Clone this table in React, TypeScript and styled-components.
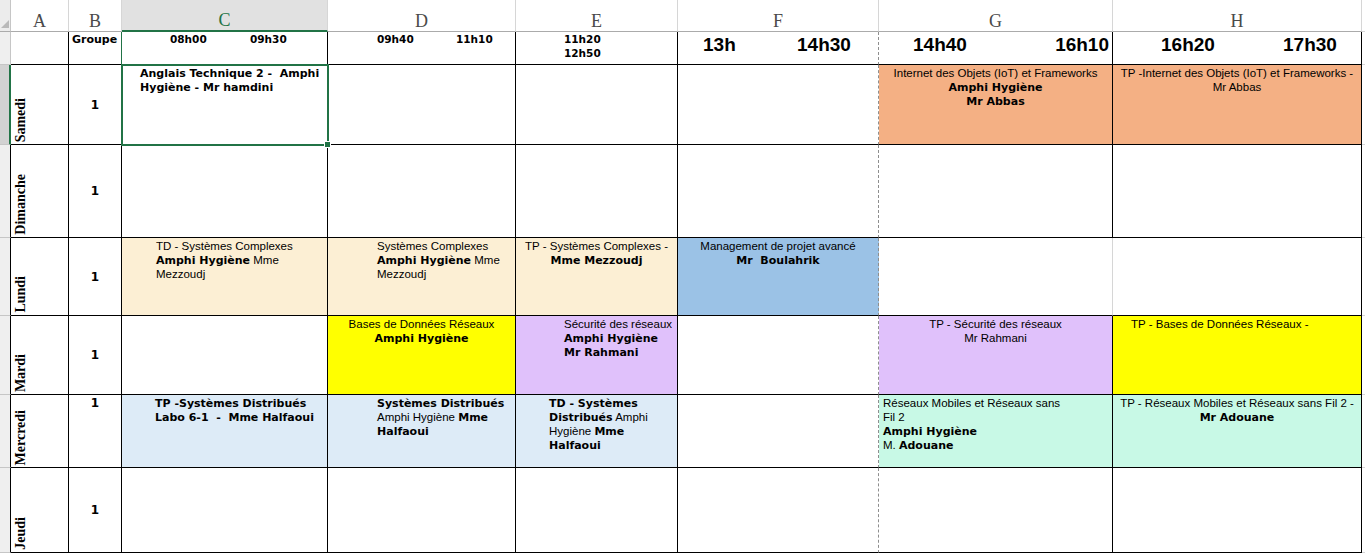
import React from 'react';
import styled, { createGlobalStyle, css } from 'styled-components';

const GlobalStyle = createGlobalStyle`
  html, body { margin: 0; padding: 0; background: #fff; overflow: hidden; }
  #root { width: 1365px; height: 555px; }
`;

const GREEN = '#217346';

const Sheet = styled.div`
  display: grid;
  grid-template-columns: 11px 58px 53px 206px 188px 162px 201px 234px 249px 1fr;
  grid-template-rows: 32px 33px 80px 93px 78px 79px 73px 85px 1fr;
  width: 1365px;
  height: 555px;
  overflow: hidden;
  background: #fff;
`;

const Base = styled.div`
  box-sizing: border-box;
  min-width: 0;
  overflow: hidden;
  white-space: pre;
  color: #000;
`;

const Corner = styled(Base)`
  position: relative;
  background: #ececec;
  border-right: 1px solid #c6c6c6;
  border-bottom: 1px solid #ababab;
  &::after {
    content: '';
    position: absolute;
    right: 1px;
    bottom: 3px;
    width: 0;
    height: 0;
    border-left: 8px solid transparent;
    border-bottom: 8px solid #b9b9b9;
  }
`;

const ColHeader = styled(Base)<{ $active?: boolean }>`
  display: flex;
  align-items: flex-end;
  justify-content: center;
  font-family: 'Liberation Serif', 'Times New Roman', serif;
  font-size: 18px;
  line-height: 20px;
  color: ${(p) => (p.$active ? GREEN : '#4a4a4a')};
  background: ${(p) => (p.$active ? '#e1e1e1' : '#fff')};
  border-right: 1px solid #d6d6d6;
  border-bottom: ${(p) => (p.$active ? `2px solid ${GREEN}` : '1px solid #ababab')};
`;

const RowHead = styled(Base)<{ $active?: boolean; $table?: boolean }>`
  background: ${(p) => (p.$active ? '#d2d2d2' : '#efefef')};
  border-bottom: 1px solid #c6c6c6;
  border-right: ${(p) =>
    p.$active ? `2px solid ${GREEN}` : p.$table ? '1px solid #000' : '1px solid #c6c6c6'};
`;

const Filler = styled(Base)`
  border-bottom: 1px solid #d6d6d6;
`;

const DayCell = styled(Base)`
  display: flex;
  align-items: flex-end;
  padding: 0 0 2px 2px;
  border-right: 1px solid #000;
  border-bottom: 1px solid #000;
`;

const DayLabel = styled.span`
  writing-mode: vertical-rl;
  transform: rotate(180deg);
  font-family: 'Liberation Serif', 'Times New Roman', serif;
  font-weight: bold;
  font-size: 14px;
  line-height: 16px;
`;

const GroupCell = styled(Base)<{ $top?: boolean }>`
  display: flex;
  justify-content: center;
  align-items: ${(p) => (p.$top ? 'flex-start' : 'center')};
  padding-top: ${(p) => (p.$top ? '1px' : '0')};
  font-family: 'DejaVu Sans', sans-serif;
  font-weight: bold;
  font-size: 12px;
  line-height: 14px;
  border-right: 1px solid #000;
  border-bottom: 1px solid #000;
`;

const TimeCell = styled(Base)<{ $indent?: number; $spread?: boolean; $dashed?: boolean; $edgeColor?: string }>`
  display: flex;
  align-items: flex-start;
  justify-content: ${(p) => (p.$spread ? 'space-between' : 'flex-start')};
  padding: 0 3px 0 ${(p) => p.$indent ?? 0}px;
  border-bottom: 1px solid #000;
  border-right: ${(p) => (p.$dashed ? '1px dashed #8e8e8e' : `1px solid ${p.$edgeColor ?? '#000'}`)};
`;

const Label = styled.span`
  font-family: 'DejaVu Sans', sans-serif;
  font-weight: bold;
  font-size: 11px;
  line-height: 13px;
  padding-top: 1px;
`;

const SmallTime = styled.span<{ $w?: number }>`
  font-family: 'DejaVu Sans', sans-serif;
  font-weight: bold;
  font-size: 10.5px;
  line-height: 13px;
  padding-top: 1px;
  ${(p) => p.$w && css`width: ${p.$w}px; flex: none;`}
`;

const TimeStack = styled.div`
  display: flex;
  flex-direction: column;
`;

const BigTime = styled.span<{ $w?: number }>`
  font-family: 'Liberation Sans', Arial, sans-serif;
  font-weight: bold;
  font-size: 19px;
  line-height: 22px;
  padding-top: 2px;
  ${(p) => p.$w && css`width: ${p.$w}px; flex: none;`}
`;

const SlotCell = styled(Base)<{
  $bg?: string;
  $indent?: number;
  $center?: boolean;
  $edge?: 'solid' | 'dashed' | 'grid';
  $selected?: boolean;
}>`
  background: ${(p) => p.$bg ?? '#fff'};
  padding: 1px 2px 0 ${(p) => p.$indent ?? 2}px;
  text-align: ${(p) => (p.$center ? 'center' : 'left')};
  font-family: 'Liberation Sans', Arial, sans-serif;
  font-size: 11.5px;
  line-height: 14px;
  border-bottom: 1px solid #000;
  border-right: ${(p) =>
    p.$edge === 'dashed'
      ? '1px dashed #8e8e8e'
      : p.$edge === 'grid'
      ? '1px solid #d6d6d6'
      : '1px solid #000'};
  ${(p) =>
    p.$selected &&
    css`
      position: relative;
      overflow: visible;
      outline: 2px solid ${GREEN};
      outline-offset: -1px;
      z-index: 1;
      &::after {
        content: '';
        position: absolute;
        right: -4px;
        bottom: -4px;
        width: 5px;
        height: 5px;
        background: ${GREEN};
        border: 1px solid #fff;
      }
    `}
`;

const Line = styled.div`
  height: 14px;
`;

const Strong = styled.b`
  font-family: 'DejaVu Sans', sans-serif;
  font-size: 11px;
  font-weight: bold;
`;

type Seg = string | { b: string };
type Slot = {
  bg?: string;
  indent?: number;
  center?: boolean;
  edge?: 'grid';
  selected?: boolean;
  lines?: Seg[][];
};
type Day = { name: string; topGroup?: boolean; active?: boolean; slots: Slot[] };

const ORANGE = '#f4b084';
const PEACH = '#fcefd4';
const BLUE = '#9bc2e6';
const YELLOW = '#ffff00';
const PURPLE = '#e0c1fb';
const LIGHTBLUE = '#ddebf7';
const MINT = '#c8f9e6';

const days: Day[] = [
  {
    name: 'Samedi',
    active: true,
    slots: [
      {
        indent: 18,
        selected: true,
        lines: [[{ b: 'Anglais Technique 2 -  Amphi' }], [{ b: 'Hygiène - Mr hamdini' }]],
      },
      {},
      {},
      {},
      {
        bg: ORANGE,
        center: true,
        lines: [['Internet des Objets (IoT) et Frameworks'], [{ b: 'Amphi Hygiène' }], [{ b: 'Mr Abbas' }]],
      },
      {
        bg: ORANGE,
        center: true,
        lines: [['TP -Internet des Objets (IoT) et Frameworks -'], ['Mr Abbas']],
      },
    ],
  },
  { name: 'Dimanche', slots: [{}, {}, {}, {}, {}, {}] },
  {
    name: 'Lundi',
    slots: [
      {
        bg: PEACH,
        indent: 34,
        lines: [['TD - Systèmes Complexes'], [{ b: 'Amphi Hygiène' }, ' Mme'], ['Mezzoudj']],
      },
      {
        bg: PEACH,
        indent: 49,
        lines: [['Systèmes Complexes'], [{ b: 'Amphi Hygiène' }, ' Mme'], ['Mezzoudj']],
      },
      {
        bg: PEACH,
        center: true,
        lines: [['TP - Systèmes Complexes -'], [{ b: 'Mme Mezzoudj' }]],
      },
      {
        bg: BLUE,
        center: true,
        lines: [['Management de projet avancé'], [{ b: 'Mr  Boulahrik' }]],
      },
      { edge: 'grid' },
      {},
    ],
  },
  {
    name: 'Mardi',
    slots: [
      {},
      {
        bg: YELLOW,
        center: true,
        lines: [['Bases de Données Réseaux'], [{ b: 'Amphi Hygiène' }]],
      },
      {
        bg: PURPLE,
        indent: 48,
        lines: [['Sécurité des réseaux'], [{ b: 'Amphi Hygiène' }], [{ b: 'Mr Rahmani' }]],
      },
      {},
      {
        bg: PURPLE,
        center: true,
        lines: [['TP - Sécurité des réseaux'], ['Mr Rahmani']],
      },
      {
        bg: YELLOW,
        indent: 18,
        lines: [['TP - Bases de Données Réseaux -']],
      },
    ],
  },
  {
    name: 'Mercredi',
    topGroup: true,
    slots: [
      {
        bg: LIGHTBLUE,
        indent: 33,
        lines: [[{ b: 'TP -Systèmes Distribués' }], [{ b: 'Labo 6-1  -  Mme Halfaoui' }]],
      },
      {
        bg: LIGHTBLUE,
        indent: 49,
        lines: [[{ b: 'Systèmes Distribués' }], ['Amphi Hygiène ', { b: 'Mme' }], [{ b: 'Halfaoui' }]],
      },
      {
        bg: LIGHTBLUE,
        indent: 33,
        lines: [
          [{ b: 'TD - Systèmes' }],
          [{ b: 'Distribués' }, ' Amphi'],
          ['Hygiène ', { b: 'Mme' }],
          [{ b: 'Halfaoui' }],
        ],
      },
      {},
      {
        bg: MINT,
        indent: 4,
        lines: [['Réseaux Mobiles et Réseaux sans'], ['Fil 2'], [{ b: 'Amphi Hygiène' }], ['M. ', { b: 'Adouane' }]],
      },
      {
        bg: MINT,
        center: true,
        lines: [['TP - Réseaux Mobiles et Réseaux sans Fil 2 -'], [{ b: 'Mr Adouane' }]],
      },
    ],
  },
  { name: 'Jeudi', slots: [{}, {}, {}, {}, {}, {}] },
];

const letters = ['A', 'B', 'C', 'D', 'E', 'F', 'G', 'H'];

function renderLine(segs: Seg[], key: number) {
  return (
    <Line key={key}>
      {segs.map((s, i) =>
        typeof s === 'string' ? <React.Fragment key={i}>{s}</React.Fragment> : <Strong key={i}>{s.b}</Strong>
      )}
    </Line>
  );
}

export default function App() {
  return (
    <>
      <GlobalStyle />
      <Sheet>
        <Corner />
        {letters.map((l) => (
          <ColHeader key={l} $active={l === 'C'}>
            {l}
          </ColHeader>
        ))}
        <Filler />

        <RowHead />
        <TimeCell />
        <TimeCell $indent={3} $edgeColor={GREEN}>
          <Label>Groupe</Label>
        </TimeCell>
        <TimeCell $indent={48}>
          <SmallTime $w={80}>08h00</SmallTime>
          <SmallTime>09h30</SmallTime>
        </TimeCell>
        <TimeCell $indent={49}>
          <SmallTime $w={79}>09h40</SmallTime>
          <SmallTime>11h10</SmallTime>
        </TimeCell>
        <TimeCell $indent={48}>
          <TimeStack>
            <SmallTime>11h20</SmallTime>
            <SmallTime>12h50</SmallTime>
          </TimeStack>
        </TimeCell>
        <TimeCell $indent={25} $dashed>
          <BigTime $w={94}>13h</BigTime>
          <BigTime>14h30</BigTime>
        </TimeCell>
        <TimeCell $indent={34} $spread>
          <BigTime>14h40</BigTime>
          <BigTime>16h10</BigTime>
        </TimeCell>
        <TimeCell $indent={48}>
          <BigTime $w={122}>16h20</BigTime>
          <BigTime>17h30</BigTime>
        </TimeCell>
        <Filler />

        {days.map((d) => (
          <React.Fragment key={d.name}>
            <RowHead $table $active={d.active} />
            <DayCell>
              <DayLabel>{d.name}</DayLabel>
            </DayCell>
            <GroupCell $top={d.topGroup}>1</GroupCell>
            {d.slots.map((s, i) => (
              <SlotCell
                key={i}
                $bg={s.bg}
                $indent={s.indent}
                $center={s.center}
                $selected={s.selected}
                $edge={i === 3 ? 'dashed' : s.edge ?? 'solid'}
              >
                {s.lines?.map((ln, k) => renderLine(ln, k))}
              </SlotCell>
            ))}
            <Filler />
          </React.Fragment>
        ))}
      </Sheet>
    </>
  );
}
